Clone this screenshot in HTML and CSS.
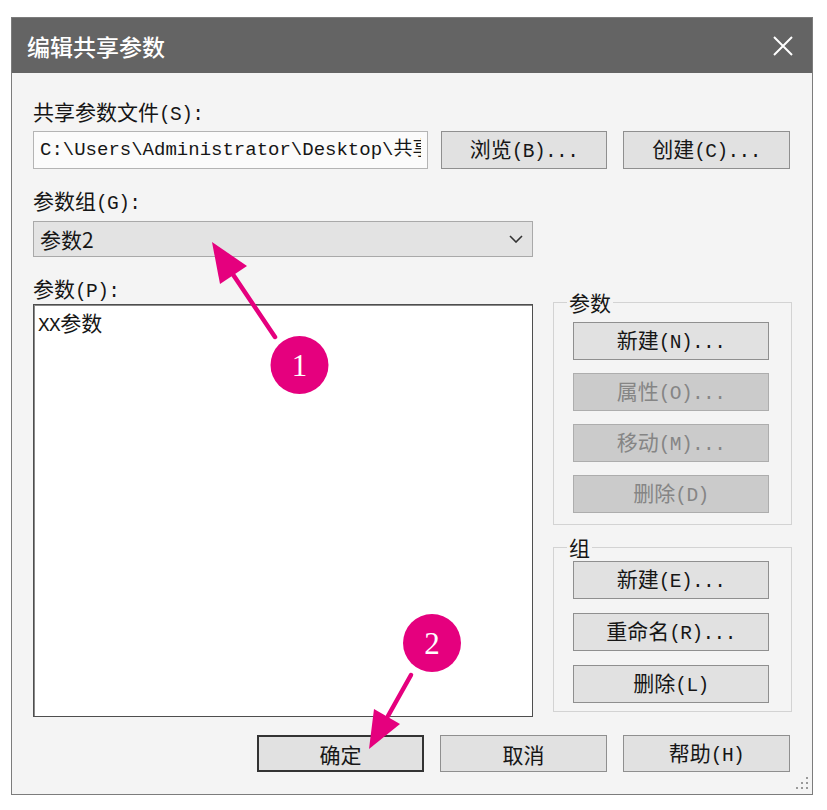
FILE: index.html
```html
<!DOCTYPE html>
<html lang="zh-CN">
<head>
<meta charset="utf-8">
<title>编辑共享参数</title>
<link rel="stylesheet" href="styles.css">
</head>
<body>
<div class="window">
  <div class="titlebar">
    <span class="title">编辑共享参数</span>
    <svg class="close" width="20" height="20" viewBox="0 0 20 20"><path d="M1 1L19 19M19 1L1 19" stroke="#fff" stroke-width="2" fill="none"/></svg>
  </div>
  <div class="content">
    <div class="label lbl-file">共享参数文件<span class="a">(S):</span></div>
    <div class="file-row">
      <div class="path"><span class="path-text">C:\Users\Administrator\Desktop\共享</span></div>
      <button class="btn btn-browse">浏览<span class="a">(B)...</span></button>
      <button class="btn btn-create">创建<span class="a">(C)...</span></button>
    </div>
    <div class="label lbl-group">参数组<span class="a">(G):</span></div>
    <div class="select">
      <span class="select-text">参数2</span>
      <svg class="chevron" width="14" height="8" viewBox="0 0 14 8"><path d="M1 1L7 7L13 1" stroke="#333" stroke-width="1.6" fill="none"/></svg>
    </div>
    <div class="main">
      <div class="left">
        <div class="label">参数<span class="a">(P):</span></div>
        <div class="listbox">
          <div class="item"><span class="a">XX</span>参数</div>
        </div>
      </div>
      <div class="right">
        <fieldset class="group g1">
          <legend>参数</legend>
          <button class="btn gbtn">新建<span class="a">(N)...</span></button>
          <button class="btn gbtn" disabled>属性<span class="a">(O)...</span></button>
          <button class="btn gbtn" disabled>移动<span class="a">(M)...</span></button>
          <button class="btn gbtn" disabled>删除<span class="a">(D)</span></button>
        </fieldset>
        <fieldset class="group g2">
          <legend>组</legend>
          <button class="btn gbtn">新建<span class="a">(E)...</span></button>
          <button class="btn gbtn">重命名<span class="a">(R)...</span></button>
          <button class="btn gbtn">删除<span class="a">(L)</span></button>
        </fieldset>
      </div>
    </div>
    <div class="footer">
      <button class="btn fbtn default">确定</button>
      <button class="btn fbtn">取消</button>
      <button class="btn fbtn">帮助<span class="a">(H)</span></button>
    </div>
  </div>
  <svg class="grip" width="14" height="14" viewBox="0 0 14 14">
    <rect x="11" y="1" width="2" height="2" fill="#9a9a9a"/>
    <rect x="6" y="6" width="2" height="2" fill="#9a9a9a"/>
    <rect x="11" y="6" width="2" height="2" fill="#9a9a9a"/>
    <rect x="1" y="11" width="2" height="2" fill="#9a9a9a"/>
    <rect x="6" y="11" width="2" height="2" fill="#9a9a9a"/>
    <rect x="11" y="11" width="2" height="2" fill="#9a9a9a"/>
  </svg>
</div>
<svg class="marks" width="827" height="810" viewBox="0 0 827 810">
  <line x1="275" y1="337" x2="232" y2="273" stroke="#e5007e" stroke-width="4.5" stroke-linecap="round"/>
  <polygon points="212,242 247,266 220,284" fill="#e5007e"/>
  <circle cx="299.5" cy="365" r="29" fill="#e5007e"/>
  <text x="299.5" y="376" class="num">1</text>
  <line x1="411" y1="675" x2="388" y2="716" stroke="#e5007e" stroke-width="4.5" stroke-linecap="round"/>
  <polygon points="369,749 400,724 374,709" fill="#e5007e"/>
  <circle cx="432" cy="643" r="29" fill="#e5007e"/>
  <text x="432" y="654" class="num">2</text>
</svg>
</body>
</html>
```

FILE: styles.css
```css
html, body {
  margin: 0;
  padding: 0;
  background: #ffffff;
}

body {
  width: 827px;
  height: 810px;
  position: relative;
  overflow: hidden;
}

.window {
  box-sizing: border-box;
  margin: 17px 0 0 11px;
  width: 802px;
  height: 778px;
  border: 1px solid #7c7c7c;
  background: #f4f4f4;
  display: flex;
  flex-direction: column;
  position: relative;
}

.titlebar {
  height: 55px;
  flex: none;
  background: #646464;
  display: flex;
  align-items: center;
  justify-content: space-between;
  padding: 0 19px 0 15px;
}

.title {
  color: #ffffff;
  font-family: "Noto Sans CJK SC", sans-serif;
  font-size: 23px;
  font-weight: 500;
  line-height: 26px;
}

.close {
  display: block;
}

.content {
  flex: 1;
  padding: 0 22px 0 21px;
  font-family: "Noto Sans CJK SC", sans-serif;
  font-size: 21px;
  color: #161616;
}

.a {
  font-family: "Liberation Mono", monospace;
  font-size: 19.5px;
  letter-spacing: -0.6px;
}

.label {
  line-height: 24px;
  height: 24px;
  white-space: nowrap;
}

.lbl-file {
  margin-top: 26px;
}

.file-row {
  margin-top: 8px;
  display: flex;
  height: 38px;
}

.path {
  box-sizing: border-box;
  width: 395px;
  height: 38px;
  border: 1px solid #b4b4b4;
  background: #fbfbfb;
  display: flex;
  align-items: center;
  padding: 0 6px 0 6px;
}

.path-text {
  flex: 1;
  min-width: 0;
  overflow: hidden;
  white-space: nowrap;
  font-family: "Liberation Mono", "Noto Sans CJK SC", monospace;
  font-size: 19px;
  line-height: 24px;
  color: #161616;
}

.btn {
  box-sizing: border-box;
  display: block;
  font: inherit;
  color: #161616;
  background: #e1e1e1;
  border: 1px solid #8f8f8f;
  border-radius: 0;
  padding: 0;
  margin: 0;
  height: 38px;
  text-align: center;
  line-height: 24px;
  white-space: nowrap;
}

.btn-browse {
  width: 166px;
  margin-left: 13px;
}

.btn-create {
  width: 167px;
  margin-left: 16px;
}

.lbl-group {
  margin-top: 19px;
}

.select {
  box-sizing: border-box;
  margin-top: 9px;
  width: 500px;
  height: 36px;
  border: 1px solid #a9a9a9;
  background: #e3e3e3;
  display: flex;
  align-items: center;
  justify-content: space-between;
  padding: 0 9px 0 6px;
}

.select-text {
  line-height: 24px;
}

.chevron {
  display: block;
}

.main {
  margin-top: 19px;
  display: grid;
  grid-template-columns: 500px 239px;
  column-gap: 20px;
}

.listbox {
  box-sizing: border-box;
  margin-top: 4px;
  height: 413px;
  background: #ffffff;
  border: 1px solid #4e4e4e;
  box-shadow: inset 1px 1px 0 #8a8a8a;
  padding: 5px 4px;
}

.item {
  line-height: 24px;
  white-space: nowrap;
}

.group {
  box-sizing: border-box;
  margin: 0;
  min-width: 0;
  border: 1px solid #d3d3d3;
  padding: 0 0 0 19px;
  display: flex;
  flex-direction: column;
}

.group legend {
  line-height: 24px;
  padding: 0 2px;
  margin-left: -6px;
  color: #161616;
}

.g1 {
  margin-top: 14px;
  padding-top: 8px;
  padding-bottom: 11px;
  gap: 13px;
}

.g2 {
  margin-top: 10px;
  padding-top: 2px;
  padding-bottom: 8px;
  gap: 14px;
}

.gbtn {
  width: 196px;
  flex: none;
}

.gbtn:disabled {
  background: #cbcbcb;
  border-color: #adadad;
  color: #858585;
}

.footer {
  margin-top: 18px;
  display: flex;
  justify-content: flex-end;
  gap: 16px;
}

.fbtn {
  width: 167px;
  height: 37px;
}

.fbtn.default {
  border: 2px solid #333333;
}

.grip {
  position: absolute;
  right: 3px;
  bottom: 4px;
}

.marks {
  position: absolute;
  left: 0;
  top: 0;
  pointer-events: none;
}

.num {
  fill: #ffffff;
  font-family: "Liberation Serif", serif;
  font-size: 31px;
  text-anchor: middle;
}
```
